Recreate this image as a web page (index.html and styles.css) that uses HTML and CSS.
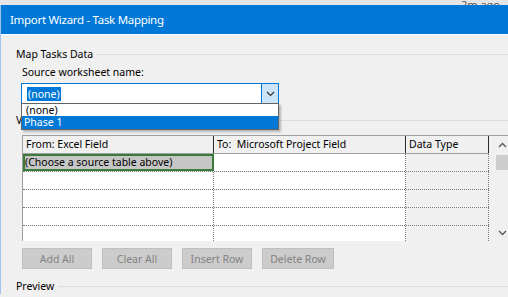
FILE: index.html
```html
<!DOCTYPE html>
<html lang="en">
<head>
    <meta charset="UTF-8">
    <title>Import Wizard - Task Mapping</title>
    <link rel="stylesheet" href="styles.css">
</head>
<body>
    <div class="strip"><span class="ago">2m ago</span></div>
    <div class="window">
        <div class="titlebar">Import Wizard - Task Mapping</div>
        <div class="content">
            <div class="group-label"><span>Map Tasks Data</span></div>
            <div class="field">
                <div class="field-label">Source worksheet name:</div>
                <div class="combo">
                    <div class="combo-value"><span class="sel">(none)</span></div>
                    <div class="combo-btn">
                        <svg width="9" height="6" viewBox="0 0 9 6"><path d="M1 1 L4.5 4.5 L8 1" fill="none" stroke="#333" stroke-width="1.2"/></svg>
                    </div>
                    <ul class="combo-list">
                        <li>(none)</li>
                        <li class="hl">Phase 1</li>
                    </ul>
                </div>
            </div>
            <div class="group-label second"><span>Verify or edit mapping</span></div>
            <div class="grid">
                <div class="grid-body">
                    <div class="row head">
                        <div class="cell">From: Excel Field</div>
                        <div class="cell">To:&nbsp; Microsoft Project Field</div>
                        <div class="cell">Data Type</div>
                    </div>
                    <div class="row">
                        <div class="cell current">(Choose a source table above)</div>
                        <div class="cell"></div>
                        <div class="cell type"></div>
                    </div>
                    <div class="row"><div class="cell"></div><div class="cell"></div><div class="cell type"></div></div>
                    <div class="row"><div class="cell"></div><div class="cell"></div><div class="cell type"></div></div>
                    <div class="row"><div class="cell"></div><div class="cell"></div><div class="cell type"></div></div>
                    <div class="row"><div class="cell"></div><div class="cell"></div><div class="cell type"></div></div>
                    <div class="row"><div class="cell"></div><div class="cell"></div><div class="cell type"></div></div>
                </div>
                <div class="scrollbar">
                    <svg class="arrow up" width="9" height="6" viewBox="0 0 9 6"><path d="M1 5 L4.5 1.5 L8 5" fill="none" stroke="#555" stroke-width="1.3"/></svg>
                    <div class="thumb"></div>
                    <div class="track"></div>
                    <svg class="arrow down" width="9" height="6" viewBox="0 0 9 6"><path d="M1 1 L4.5 4.5 L8 1" fill="none" stroke="#555" stroke-width="1.3"/></svg>
                </div>
            </div>
            <div class="buttons">
                <button disabled>Add All</button>
                <button disabled>Clear All</button>
                <button disabled>Insert Row</button>
                <button disabled class="wide">Delete Row</button>
            </div>
            <div class="group-label preview"><span>Preview</span></div>
        </div>
    </div>
</body>
</html>
```

FILE: styles.css
```css
body {
    margin: 0;
    width: 508px;
    height: 297px;
    overflow: hidden;
    background-color: #f0f0f0;
    font-family: 'Noto Sans', 'Open Sans', sans-serif;
    font-size: 10.5px;
    color: #000;
}

.strip {
    height: 5px;
    background-color: #e6e6e6;
    overflow: hidden;
    position: relative;
}

.ago {
    position: absolute;
    right: 8px;
    top: -1px;
    font-size: 11px;
    line-height: 12px;
    color: #555;
}

.window {
    border-left: 1px solid #9ec4ea;
}

.titlebar {
    height: 29px;
    line-height: 29px;
    padding-left: 9px;
    background-color: #0078d7;
    color: #fff;
    font-size: 11.5px;
    letter-spacing: -0.3px;
    border-bottom: 1px solid #fafafa;
}

.content {
    padding-left: 15px;
}

.group-label {
    display: flex;
    align-items: center;
    height: 16px;
    margin-top: 11px;
}

.group-label::after {
    content: '';
    flex: 1;
    border-top: 1px solid #dcdcdc;
    margin-left: 4px;
}

.group-label.second {
    margin-top: 8px;
}

.group-label.preview {
    margin-top: 9px;
}

.field {
    padding-left: 6px;
}

.field-label {
    height: 16px;
    line-height: 16px;
    margin-top: 2px;
}

.combo {
    position: relative;
    display: flex;
    width: 256px;
    height: 19px;
    margin-top: 3px;
    margin-left: -1px;
    border: 1px solid #0078d7;
    background-color: #fff;
}

.combo-value {
    flex: 1;
    display: flex;
    align-items: center;
    padding-left: 5px;
}

.sel {
    background-color: #0078d7;
    color: #fff;
    padding: 0 1px;
    line-height: 14px;
}

.combo-btn {
    width: 16px;
    display: flex;
    align-items: center;
    justify-content: center;
    background-color: #cce4f7;
    border-left: 1px solid #0078d7;
}

.combo-list {
    position: absolute;
    top: 100%;
    left: -1px;
    width: 256px;
    margin: 0;
    padding: 0;
    list-style: none;
    background-color: #fff;
    border: 1px solid #646464;
    box-shadow: 2px 2px 2px rgba(0, 0, 0, 0.25);
    z-index: 2;
}

.combo-list li {
    height: 12px;
    line-height: 12px;
    padding-left: 4px;
}

.combo-list li.hl {
    height: 13px;
    line-height: 13px;
    background-color: #0078d7;
    color: #fff;
    padding-left: 2px;
}

.grid {
    display: flex;
    height: 105px;
    margin-top: 7px;
    margin-left: 6px;
    border-top: 1px solid #a0a0a0;
    border-left: 1px solid #a0a0a0;
    overflow: hidden;
}

.grid-body {
    width: 466px;
}

.row {
    display: flex;
    height: 17px;
    border-bottom: 1px dotted #7a7a7a;
}

.row.head {
    height: 17px;
    border-bottom: 1px solid #a0a0a0;
}

.cell {
    height: 100%;
    box-sizing: border-box;
    border-right: 1px dotted #7a7a7a;
    background-color: #fff;
    line-height: 16px;
    padding-left: 2px;
    white-space: nowrap;
}

.cell:nth-child(1) {
    width: 191px;
}

.cell:nth-child(2) {
    width: 192px;
}

.cell:nth-child(3) {
    width: 83px;
}

.head .cell {
    background-color: #f0f0f0;
    border-right: 1px solid #2b2b2b;
    padding-left: 3px;
}

.cell.type {
    background-color: #f0f0f0;
}

.cell.current {
    background-color: #c6c6c6;
    border: 2px solid #3a7a3a;
    line-height: 13px;
    padding-left: 0;
}

.scrollbar {
    display: flex;
    flex-direction: column;
    align-items: center;
    width: 19px;
    margin-left: 1px;
    padding-left: 6px;
    box-sizing: border-box;
    background-color: #f0f0f0;
}

.arrow.up {
    margin: 6px 0 7px;
}

.arrow.down {
    margin: 0 0 5px;
}

.thumb {
    align-self: stretch;
    height: 15px;
    background-color: #cdcdcd;
}

.track {
    flex: 1;
}

.buttons {
    display: flex;
    gap: 10px;
    margin-top: 7px;
    margin-left: 6px;
}

button {
    width: 70px;
    height: 21px;
    padding: 0;
    font-family: inherit;
    font-size: 10.5px;
    color: #838383;
    background-color: #cccccc;
    border: 1px solid #bfbfbf;
    border-radius: 0;
}

button.wide {
    width: 72px;
}
```
